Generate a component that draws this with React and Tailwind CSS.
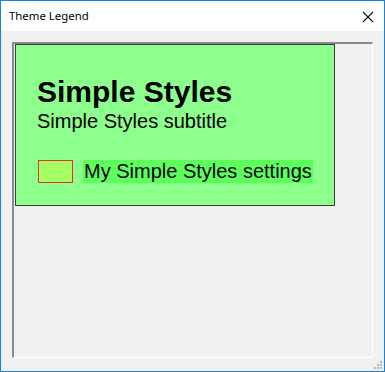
export default function App() {
  return (
    <div className="w-[385px] h-[372px] border border-[#1883d7] bg-[#f0f0f0] flex flex-col overflow-hidden" style={{ fontFamily: '"Liberation Sans", Arial, sans-serif' }}>
      {/* Title bar */}
      <div className="h-[30px] bg-white flex items-center justify-between pl-[8px] pr-[10px] shrink-0">
        <span className="text-[11.4px] text-black" style={{ fontFamily: '"Noto Sans", "Open Sans", sans-serif' }}>Theme Legend</span>
        <svg width="12" height="12" viewBox="0 0 12 12" className="mt-[1px]">
          <path d="M1 1 L11 11 M11 1 L1 11" stroke="#111" strokeWidth="1.1" fill="none" />
        </svg>
      </div>

      {/* Client area */}
      <div className="flex-1 relative pt-[11px] pl-[11px] pr-[11px] pb-[13px] flex">
        <div className="flex-1 border-t-2 border-l-2 border-t-[#8a8a8a] border-l-[#8a8a8a] border-r border-b border-r-white border-b-white bg-[#f0f0f0] pl-[1px] pr-[37px] flex flex-col">
          <div className="h-[162px] bg-[#8cff8c] border border-[#3c3c3c] flex flex-col pl-[21px] pt-[32px]">
            <div className="text-[30px] font-bold leading-[30px] text-black">Simple Styles</div>
            <div className="text-[20px] leading-[22px] text-black mt-[3px]">Simple Styles subtitle</div>
            <div className="flex items-center mt-[28px] gap-[10px]">
              <div className="ml-[1px] w-[35px] h-[23px] border border-[#e8302a] bg-[#a6ff62]" />
              <div className="h-[23px] bg-[#5cff5c] flex items-center px-[1px] text-[20px] leading-[23px] text-black">My Simple Styles settings</div>
            </div>
          </div>
        </div>
        {/* Resize grip */}
        <svg width="10" height="10" viewBox="0 0 10 10" className="absolute right-[1px] bottom-[1px]">
          <g fill="#b8b8b8">
            <rect x="7" y="1" width="2" height="2" />
            <rect x="4" y="4" width="2" height="2" />
            <rect x="7" y="4" width="2" height="2" />
            <rect x="1" y="7" width="2" height="2" />
            <rect x="4" y="7" width="2" height="2" />
            <rect x="7" y="7" width="2" height="2" />
          </g>
        </svg>
      </div>
    </div>
  );
}
